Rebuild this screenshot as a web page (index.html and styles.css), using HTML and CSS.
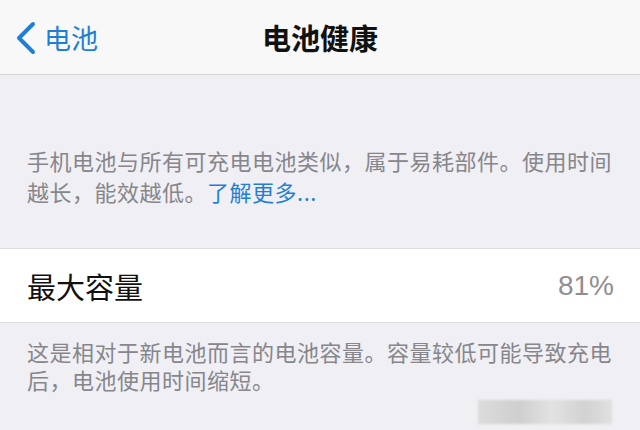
FILE: index.html
```html
<!DOCTYPE html>
<html lang="zh-CN">
<head>
  <meta charset="UTF-8">
  <meta name="viewport" content="width=device-width, initial-scale=1.0">
  <title>电池健康</title>
  <link rel="stylesheet" href="styles.css">
</head>
<body>
  <header class="navbar">
    <a class="back" href="#">
      <svg class="chevron" width="24" height="36" viewBox="0 0 24 36">
        <path d="M19 4 L5 18 L19 32" fill="none" stroke="currentColor" stroke-width="4" stroke-linecap="round" stroke-linejoin="round"/>
      </svg>
      <span>电池</span>
    </a>
    <h1 class="title">电池健康</h1>
  </header>

  <section class="intro">
    <p>手机电池与所有可充电电池类似，属于易耗部件。使用时间越长，能效越低。<a href="#" class="link">了解更多...</a></p>
  </section>

  <div class="group">
    <div class="row">
      <span class="label">最大容量</span>
      <span class="value">81%</span>
    </div>
  </div>

  <section class="footnote">
    <p>这是相对于新电池而言的电池容量。容量较低可能导致充电后，电池使用时间缩短。</p>
  </section>

  <div class="mark"></div>
</body>
</html>
```

FILE: styles.css
```css
html, body {
  margin: 0;
  padding: 0;
  height: 100%;
}
body {
  font-family: "Noto Sans CJK SC", "Noto Sans", sans-serif;
  background-color: #efeff4;
  color: #111;
  overflow: hidden;
  position: relative;
}
.navbar {
  height: 74px;
  background-color: #f8f8f8;
  border-bottom: 1px solid #d6d6da;
  display: flex;
  align-items: center;
  justify-content: center;
  position: relative;
}
.back {
  position: absolute;
  left: 14px;
  top: 20px;
  display: flex;
  align-items: center;
  gap: 6px;
  color: #1f7fd6;
  text-decoration: none;
  font-size: 27px;
  line-height: 36px;
}
.chevron {
  display: block;
}
.title {
  margin: 0;
  font-size: 29px;
  font-weight: 600;
  line-height: 36px;
  color: #111;
}
.intro {
  padding: 70px 27px 41px;
}
.intro p, .footnote p {
  margin: 0;
  font-size: 22px;
  letter-spacing: 0.5px;
  line-height: 31px;
  color: #86868b;
}
.footnote p {
  line-height: 28px;
}
.link {
  color: #1f7fd6;
  text-decoration: none;
}
.group {
  background-color: #fff;
  border-top: 1px solid #dcdce0;
  border-bottom: 1px solid #dcdce0;
}
.row {
  height: 73px;
  padding: 0 26px 0 27px;
  display: flex;
  align-items: center;
  justify-content: space-between;
}
.label {
  font-size: 29px;
  color: #111;
}
.value {
  font-family: "Liberation Sans", "Noto Sans", sans-serif;
  font-size: 28px;
  color: #8e8e93;
}
.footnote {
  padding: 14px 27px 0;
}
.mark {
  position: absolute;
  right: 28px;
  bottom: 6px;
  width: 134px;
  height: 24px;
  background: linear-gradient(90deg, #dcdcdc, #cfcfcf 30%, #e2e2e2 55%, #d2d2d2 80%, #e0e0e0);
  filter: blur(1px);
}
```
